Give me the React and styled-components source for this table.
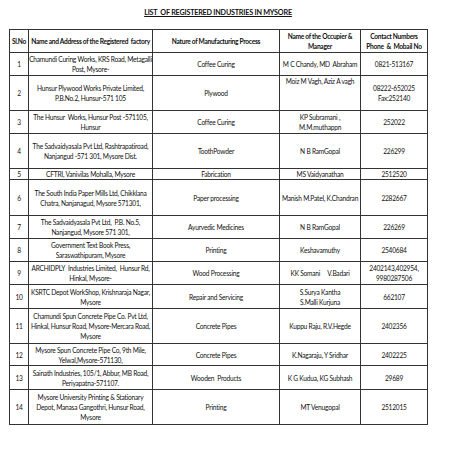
import React from 'react';
import styled, { createGlobalStyle } from 'styled-components';

const GlobalStyle = createGlobalStyle`
  html, body {
    margin: 0;
    padding: 0;
    background: #fff;
  }
  body {
    font-family: Lato, "Liberation Sans", sans-serif;
    color: #111;
  }
`;

const Page = styled.div`
  width: 452px;
  height: 452px;
  padding: 8px 0 0 9px;
  box-sizing: border-box;
`;

const Title = styled.div`
  width: 418px;
  text-align: center;
  font-size: 7.2px;
  font-weight: 700;
  letter-spacing: -0.2px;
  text-decoration: underline;
  line-height: 10px;
  height: 21px;
  white-space: pre;
`;

const Table = styled.table`
  border-collapse: collapse;
  table-layout: fixed;
  width: 418px;
  font-size: 6.6px;
  letter-spacing: -0.22px;
  line-height: 10px;
`;

const Row = styled.tr`
  height: ${(p) => p.h}px;
`;

const Cell = styled.td`
  border: 1px solid #333;
  padding: 0;
  text-align: center;
  vertical-align: ${(p) => (p.top ? 'top' : 'middle')};
  white-space: pre;
  overflow: hidden;
`;

const Head = styled(Cell).attrs({ as: 'th' })`
  font-weight: 700;
  letter-spacing: -0.28px;
`;

const widths = [19, 124, 127, 81, 67];

const rows = [
  { h: 23, no: '1', name: 'Chamundi Curing Works, KRS Road, Metagalli\nPost, Mysore-', nature: 'Coffee Curing', occ: 'M C Chandy, MD  Abraham', tel: '0821-513167' },
  { h: 35, no: '2', name: 'Hunsur Plywood Works Private Limited,\nP.B.No.2, Hunsur-571 105', nature: 'Plywood', occ: 'Moiz M Vagh, Aziz A vagh', occTop: true, tel: '08222-652025\nFax:252140' },
  { h: 23, no: '3', name: 'The Hunsur  Works, Hunsur Post -571105,\nHunsur', nature: 'Coffee Curing', occ: 'KP Subramani ,\nM.M.muthappn', tel: '252022' },
  { h: 35, no: '4', name: 'The Sadvaidyasala Pvt Ltd, Rashtrapatiroad,\nNanjangud -571 301, Mysore Dist.', nature: 'ToothPowder', occ: 'N B RamGopal', tel: '226299' },
  { h: 10, no: '5', name: 'CFTRI, Vanivilas Mohalla, Mysore', nature: 'Fabrication', occ: 'MS Vaidyanathan', tel: '2512520' },
  { h: 36, no: '6', name: 'The South India Paper Mills Ltd, Chikklana\nChatra, Nanjanagud, Mysore 571301,', nature: 'Paper processing', occ: 'Manish M.Patel, K.Chandran', tel: '2282667' },
  { h: 23, no: '7', name: 'The Sadvaidyasala Pvt Ltd,  P.B. No.5,\nNanjangud, Mysore 571 301,', nature: 'Ayurvedic Medicines', occ: 'N B RamGopal', tel: '226269' },
  { h: 23, no: '8', name: 'Government Text Book Press,\nSaraswathipuram, Mysore', nature: 'Printing', occ: 'Keshavamuthy', tel: '2540684' },
  { h: 23, no: '9', name: 'ARCHIDPLY  Industries Limited,  Hunsur Rd,\nHinkal, Mysore-', nature: 'Wood Processing', occ: 'KK Somani     V.Badari', tel: '2402143,402954,\n9980287506' },
  { h: 24, no: '10', name: 'KSRTC Depot WorkShop, Krishnaraja Nagar,\nMysore', nature: 'Repair and Servicing', occ: 'S.Surya Kantha\nS.Malli Kurjuna', tel: '662107' },
  { h: 35, no: '11', name: 'Chamundi Spun Concrete Pipe Co. Pvt Ltd,\nHinkal, Hunsur Road, Mysore-Mercara Road,\nMysore', nature: 'Concrete Pipes', occ: 'Kuppu Raju, R.V.Hegde', tel: '2402356' },
  { h: 22, no: '12', name: 'Mysore Spun Concrete Pipe Co, 9th Mile,\nYelwal,Mysore-571130,', nature: 'Concrete Pipes', occ: 'K.Nagaraju, Y Sridhar', tel: '2402225' },
  { h: 24, no: '13', name: 'Sainath Industries, 105/1, Abbur, MB Road,\nPeriyapatna-571107.', nature: 'Wooden  Products', occ: 'K G Kudua, KG Subhash', tel: '29689' },
  { h: 35, no: '14', name: 'Mysore University Printing & Stationary\nDepot, Manasa Gangothri, Hunsur Road,\nMysore', nature: 'Printing', occ: 'MT Venugopal', tel: '2512015' },
];

export default function App() {
  return (
    <Page>
      <GlobalStyle />
      <Title>{'LIST  OF REGISTERED INDUSTRIES IN MYSORE'}</Title>
      <Table>
        <colgroup>
          {widths.map((w, i) => (
            <col key={i} style={{ width: w }} />
          ))}
        </colgroup>
        <thead>
          <Row h={23}>
            <Head>Sl.No</Head>
            <Head>{'Name and Address of the Registered  factory'}</Head>
            <Head>Nature of Manufacturing Process</Head>
            <Head>{'Name of the Occupier &\nManager'}</Head>
            <Head>{'Contact Numbers\nPhone  &  Mobail No'}</Head>
          </Row>
        </thead>
        <tbody>
          {rows.map((r) => (
            <Row key={r.no} h={r.h}>
              <Cell>{r.no}</Cell>
              <Cell>{r.name}</Cell>
              <Cell>{r.nature}</Cell>
              <Cell top={r.occTop}>{r.occ}</Cell>
              <Cell>{r.tel}</Cell>
            </Row>
          ))}
        </tbody>
      </Table>
    </Page>
  );
}
